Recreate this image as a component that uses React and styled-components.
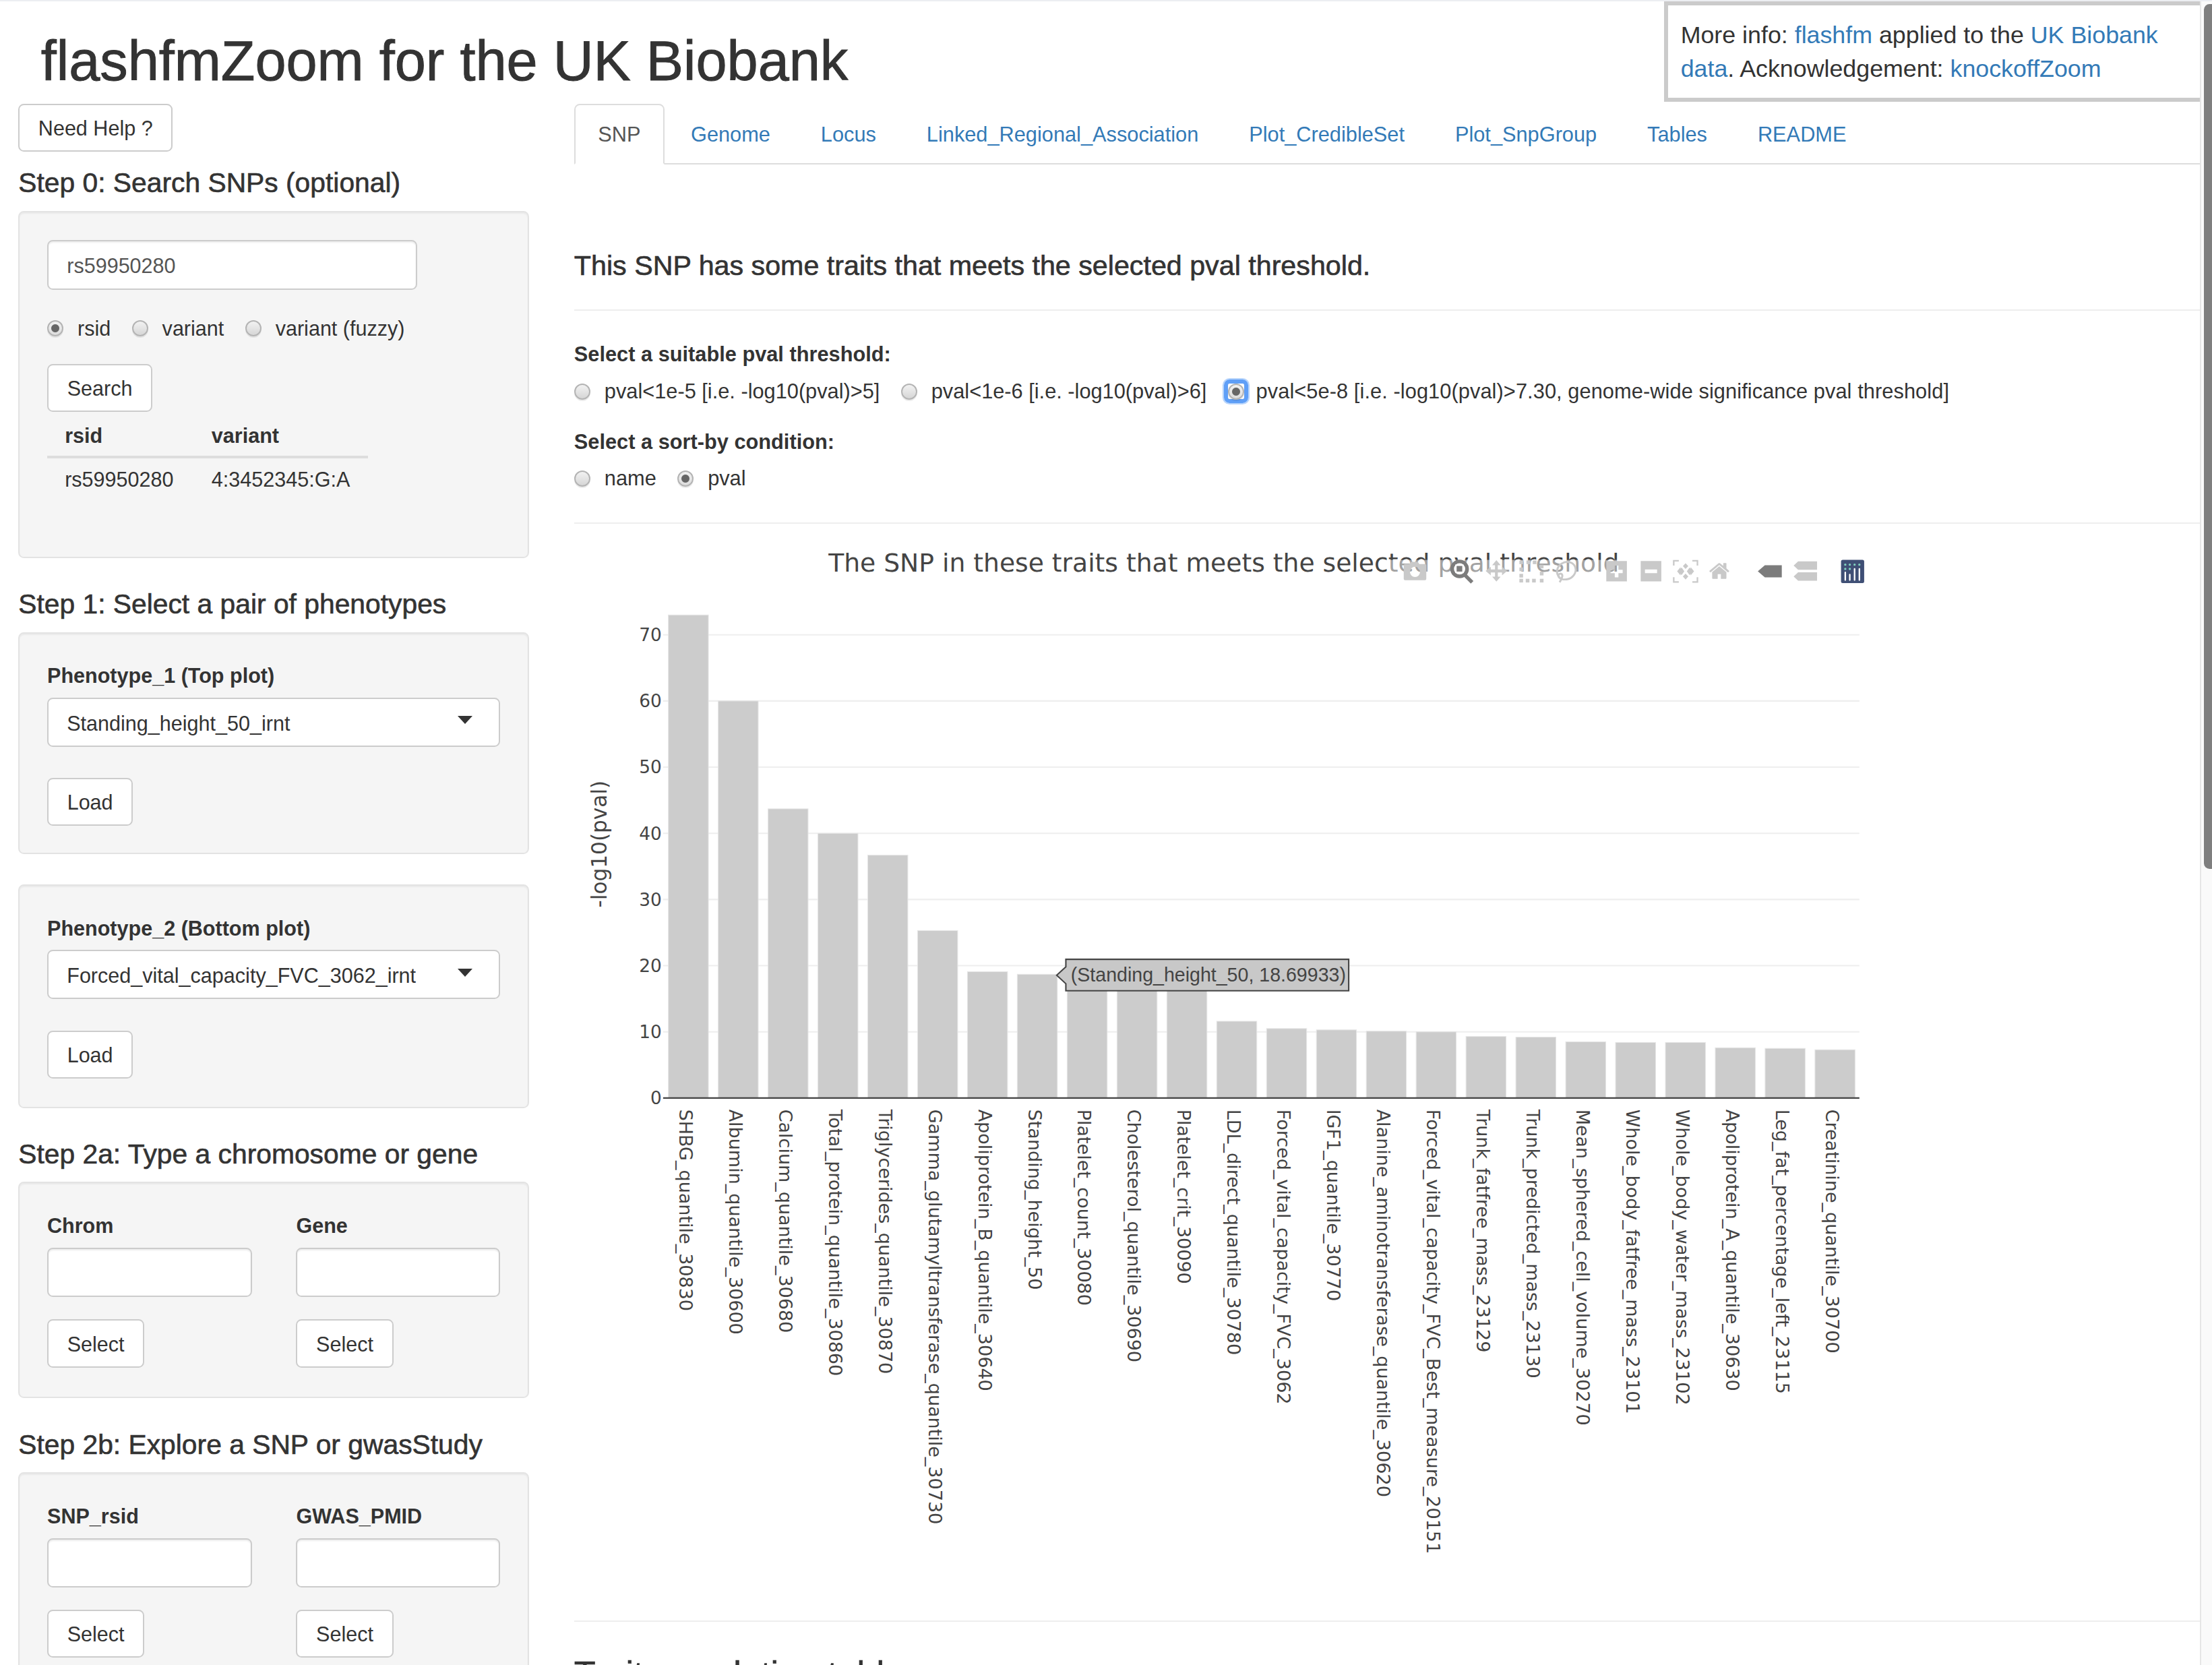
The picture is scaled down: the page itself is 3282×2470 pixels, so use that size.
import React from "react";
import styled, { createGlobalStyle } from "styled-components";

const Global = createGlobalStyle`
  html, body { margin: 0; padding: 0; height: 100%; overflow: hidden; background: #fff; }
  body { font-family: "Liberation Sans", Arial, sans-serif; color: #333; }
  #root { height: 100%; }
`;

const Shell = styled.div`
  zoom: 2.0931;
  width: 1568px;
  height: 1180px;
  overflow: hidden;
  display: flex;
  background: #fff;
  border-top: 1px solid #eceef2;
  box-sizing: border-box;
  font-size: 14.6px;
  line-height: 20px;
`;
const Content = styled.div`
  flex: 0 0 1559.5px;
  width: 1559.5px;
  min-width: 0;
`;
const ScrollTrack = styled.div`
  flex: 1;
  background: #fafafa;
  border-left: 1px solid #e6e6e6;
  padding: 2px 0 0 2px;
  box-sizing: border-box;
`;
const ScrollThumb = styled.div`
  height: 613px;
  background: #7f7f7f;
  border-radius: 4px 0 0 4px;
`;
const Header = styled.header`
  display: flex;
  justify-content: space-between;
  height: 72.5px;
`;
const Title = styled.h1`
  margin: 21.5px 0 0 29px;
  font-size: 39.6px;
  line-height: 42px;
  font-weight: 400;
  -webkit-text-stroke: 0.45px #333;
`;
const InfoBox = styled.aside`
  box-sizing: border-box;
  width: 380px;
  height: 71px;
  border: 3px solid #cbcbcb;
  border-right: 0;
  padding: 9px 9px;
  font-size: 17.1px;
  line-height: 24px;
`;
const Link = styled.a`
  color: #337ab7;
  text-decoration: none;
`;
const Columns = styled.div`
  display: flex;
`;
const Sidebar = styled.div`
  flex: 0 0 362px;
  margin: 0 32px 0 13px;
`;
const Main = styled.main`
  flex: 1;
  min-width: 0;
  font-size: 14.7px;
`;
const Button = styled.button`
  display: block;
  box-sizing: border-box;
  height: 34px;
  margin-top: ${(p) => p.$top ?? 0}px;
  padding: 1.5px 13.2px 0;
  background: #fff;
  border: 1px solid #ccc;
  border-radius: 4px;
  color: #333;
  font: inherit;
`;
const StepHeading = styled.h4`
  margin: 23px 0 9.5px;
  font-size: 19.5px;
  line-height: 20px;
  font-weight: 400;
  -webkit-text-stroke: 0.3px #333;
  ${Button} + & { margin-top: 12.5px; }
`;
const Well = styled.section`
  box-sizing: border-box;
  background: #f5f5f5;
  border: 1px solid #e3e3e3;
  border-radius: 4px;
  box-shadow: inset 0 1px 1px rgba(0, 0, 0, 0.05);
  padding: 19.5px 19.5px ${(p) => p.$bottom ?? 21}px;
  margin-bottom: ${(p) => p.$gap ?? 0}px;
  height: ${(p) => (p.$height ? `${p.$height}px` : "auto")};
`;
const TextInput = styled.input`
  display: block;
  box-sizing: border-box;
  width: ${(p) => p.$width ?? "100%"};
  height: 35.5px;
  padding: 2px 13px 0;
  border: 1px solid #ccc;
  border-radius: 4px;
  box-shadow: inset 0 1px 1px rgba(0, 0, 0, 0.075);
  background: #fff;
  color: #555;
  font: inherit;
  outline: none;
`;
const RadioRow = styled.div`
  display: flex;
  align-items: center;
  height: 20px;
  margin-top: ${(p) => p.$top ?? 6}px;
`;
const RadioLabel = styled.label`
  display: flex;
  align-items: center;
  margin-right: ${(p) => p.$gap ?? 15}px;
  color: #333;
  letter-spacing: ${(p) => p.$track ?? 0}px;
`;
const Radio = styled.input.attrs({ type: "radio", readOnly: true })`
  appearance: none;
  box-sizing: border-box;
  width: 11.5px;
  height: 11.5px;
  margin: 0 ${(p) => p.$labelGap ?? 10}px 0 0;
  flex: none;
  border-radius: 50%;
  border: 1px solid #b4b4b4;
  background: linear-gradient(#f2f2f2, #d6d6d6);
  box-shadow: 0 1px 0 rgba(0, 0, 0, 0.08);
  &:checked {
    background: radial-gradient(circle, #666 0 2.6px, transparent 3.1px), linear-gradient(#f2f2f2, #dcdcdc);
  }
`;
const FocusRing = styled.span`
  box-sizing: border-box;
  display: flex;
  align-items: center;
  justify-content: center;
  width: 17px;
  height: 17px;
  margin: 0 5.5px 0 -2.5px;
  border: 3px solid #5f9ff7;
  border-radius: 4px;
  box-shadow: 0 0 0 1px rgba(95, 159, 247, 0.45);
  ${Radio} { margin: 0; }
`;
const ResultTable = styled.table`
  border-collapse: collapse;
  width: 227.5px;
  margin-top: 7px;
  th, td { text-align: left; padding: 0 0 0 12.5px; font-size: 14.6px; color: #333; }
  th { height: 25px; padding-bottom: 4px; box-sizing: border-box; border-bottom: 2px solid #ddd; vertical-align: middle; font-weight: 700; }
  td { height: 31px; }
  th:first-child, td:first-child { width: 104px; box-sizing: border-box; }
`;
const FieldLabel = styled.label`
  display: block;
  box-sizing: border-box;
  font-weight: 700;
  height: 21px;
  padding-top: 1px;
  margin-bottom: 5px;
`;
const SelectBox = styled.div`
  box-sizing: border-box;
  height: 35px;
  padding: 2px 18.5px 0 13px;
  display: flex;
  align-items: center;
  justify-content: space-between;
  background: #fff;
  border: 1px solid #ccc;
  border-radius: 4px;
  margin-bottom: 22px;
`;
const Caret = styled.span`
  width: 0;
  height: 0;
  border-left: 5.3px solid transparent;
  border-right: 5.3px solid transparent;
  border-top: 6px solid #333;
  margin-top: -5px;
`;
const FieldGrid = styled.div`
  display: grid;
  grid-template-columns: 145px 144.5px;
  column-gap: 31.5px;
`;
const Field = styled.div`
  ${FieldLabel} { margin-bottom: 5px; }
  ${TextInput} { height: 35px; margin-bottom: 16px; }
`;
const TabBar = styled.nav`
  display: flex;
  height: 43px;
  box-sizing: border-box;
  border-bottom: 1px solid #ddd;
  gap: 1.4px;
`;
const Tab = styled.a`
  box-sizing: border-box;
  height: 43px;
  padding: 1.5px ${(p) => (p.$active ? 16 : 16.25)}px 0;
  display: flex;
  align-items: center;
  color: ${(p) => (p.$active ? "#555" : "#337ab7")};
  background: ${(p) => (p.$active ? "#fff" : "transparent")};
  border: 1px solid ${(p) => (p.$active ? "#ddd" : "transparent")};
  border-bottom-color: ${(p) => (p.$active ? "#fff" : "transparent")};
  border-radius: 4px 4px 0 0;
  white-space: nowrap;
`;
const SectionHeading = styled.h4`
  margin: 62px 0 0;
  font-size: 19.7px;
  line-height: 20px;
  font-weight: 400;
  -webkit-text-stroke: 0.3px #333;
`;
const Rule = styled.hr`
  border: 0;
  border-top: 1px solid #eee;
  margin: ${(p) => p.$top ?? 21}px 0 ${(p) => p.$bottom ?? 21}px;
`;
const ControlLabel = styled.div`
  font-weight: 700;
  margin-top: ${(p) => p.$top ?? 0}px;
`;
const PlotSvg = styled.svg`
  display: block;
  width: 1152px;
  height: 777px;
`;
const TableHeading = styled.h3`
  margin: 0;
  font-size: 25px;
  line-height: 26px;
  font-weight: 400;
  -webkit-text-stroke: 0.3px #333;
`;

const bars = [
  ["SHBG_quantile_30830", 73],
  ["Albumin_quantile_30600", 60],
  ["Calcium_quantile_30680", 43.7],
  ["Total_protein_quantile_30860", 40],
  ["Triglycerides_quantile_30870", 36.7],
  ["Gamma_glutamyltransferase_quantile_30730", 25.3],
  ["Apoliprotein_B_quantile_30640", 19.1],
  ["Standing_height_50", 18.7],
  ["Platelet_count_30080", 17],
  ["Cholesterol_quantile_30690", 16.5],
  ["Platelet_crit_30090", 16.5],
  ["LDL_direct_quantile_30780", 11.6],
  ["Forced_vital_capacity_FVC_3062", 10.5],
  ["IGF1_quantile_30770", 10.3],
  ["Alanine_aminotransferase_quantile_30620", 10.1],
  ["Forced_vital_capacity_FVC_Best_measure_20151", 10],
  ["Trunk_fatfree_mass_23129", 9.3],
  ["Trunk_predicted_mass_23130", 9.2],
  ["Mean_sphered_cell_volume_30270", 8.5],
  ["Whole_body_fatfree_mass_23101", 8.4],
  ["Whole_body_water_mass_23102", 8.4],
  ["Apoliprotein_A_quantile_30630", 7.6],
  ["Leg_fat_percentage_left_23115", 7.5],
  ["Creatinine_quantile_30700", 7.3],
];
const Y0 = 778;
const UNIT = 4.69;
const X0 = 473.7;
const PITCH = 35.34;
const BAR = 28.4;
const PLOT_FONT = "'DejaVu Sans', Verdana, sans-serif";
const OFF = "#c9c9c9";
const ON = "#7c7c7c";

function Modebar() {
  return (
    <g>
      <rect x="985" y="396.6" width="338" height="17" fill="#fff" opacity="0.5" />
      {/* camera */}
      <path fill={OFF} fillRule="evenodd" d="M996 399.5h3l1-1.5h5l1 1.5h4a1 1 0 0 1 1 1v9.5a1 1 0 0 1-1 1h-14a1 1 0 0 1-1-1v-9.5a1 1 0 0 1 1-1zM1003 401.5a3.6 3.6 0 1 0 0 7.2a3.6 3.6 0 1 0 0-7.2z" />
      {/* zoom */}
      <circle cx="1034.6" cy="403" r="5.3" fill="#fff" stroke={ON} strokeWidth="2.6" />
      <rect x="1032" y="400.4" width="5" height="5" fill={ON} stroke="#fff" strokeWidth="1" />
      <path d="M1038.5 407.5l5 5" stroke={ON} strokeWidth="2.6" />
      {/* pan */}
      <path fill={OFF} d="M1060.7 396.8l3 3.6h-2v3h3v-2l3.6 3.1-3.6 3v-2h-3v3h2l-3 3.5-3-3.5h2v-3h-3v2l-3.6-3 3.6-3.1v2h3v-3h-2z" />
      {/* box select */}
      <g fill={OFF}>
        <rect x="1077" y="397" width="2.6" height="2.6" />
        <rect x="1077" y="402" width="2.6" height="2.6" />
        <rect x="1077" y="406.5" width="2.6" height="2.6" />
        <rect x="1077" y="410" width="2.6" height="2.6" />
        <rect x="1081.5" y="410" width="2.6" height="2.6" />
        <rect x="1086" y="410" width="2.6" height="2.6" />
        <rect x="1091.5" y="410" width="2.6" height="2.6" />
        <rect x="1091.5" y="405" width="2.6" height="2.6" />
        <rect x="1091.5" y="400" width="2.6" height="2.6" />
        <rect x="1082" y="397" width="2.6" height="2.6" />
        <rect x="1086.5" y="397" width="2.6" height="2.6" />
      </g>
      {/* lasso */}
      <path fill="none" stroke={OFF} strokeWidth="1.4" d="M1105.5 409a6.8 6 -30 1 1 5 1.4c-2.5 .3-4.6-.7-5.4-1.4c-1-1-.2-3 1.4-2.6c1.3.4 1.5 2-1 6" />
      {/* zoom in */}
      <path fill={OFF} d="M1138.6 397.4h14.6v14.4h-14.6zM1144.6 400.6v3h-3v2.4h3v3h2.6v-3h3v-2.4h-3v-3z" fillRule="evenodd" />
      {/* zoom out */}
      <path fill={OFF} d="M1163 397.4h14.6v14.4h-14.6zM1166 403.4v2.6h8.6v-2.6z" fillRule="evenodd" />
      {/* autoscale */}
      <path fill="none" stroke={OFF} strokeWidth="1.1" d="M1190 397.2h-3.6v3.4M1199.6 397.2h3.6v3.4M1190 412.3h-3.6v-3.4M1199.6 412.3h3.6v-3.4" />
      <path fill={OFF} d="M1188.8 404.7l2.4-3v1.2l3.6-4 3.6 4v-1.2l2.4 3-2.4 3v-1.2l-3.6 4-3.6-4v1.2z" />
      <path fill="#fff" d="M1192.5 400.6l2.3 2.4 2.3-2.4.9.9-2.3 3.2 2.3 3.2-.9.9-2.3-2.4-2.3 2.4-.9-.9 2.3-3.2-2.3-3.2z" />
      {/* home */}
      <g transform="translate(1211.4 396.6) scale(0.0157 0.0157)">
        <path fill={OFF} transform="translate(0,850) scale(1,-1)" d="m786 296v-267q0-15-11-26t-25-10h-214v214h-143v-214h-214q-15 0-25 10t-11 26v267q0 1 0 2t0 2l321 264 321-264q1-1 1-4z m124 39l-34-41q-5-5-12-6h-2q-7 0-12 3l-386 322-386-322q-7-4-13-4-7 2-12 7l-35 41q-4 5-3 13t6 12l401 334q18 15 42 15t43-15l136-114v109q0 8 5 13t13 5h107q8 0 13-5t5-13v-227l122-102q5-5 6-12t-4-13z" />
      </g>
      {/* closest */}
      <path fill={ON} d="M1251 400.4h12v8.6h-12l-5-4.3z" />
      {/* compare */}
      <path fill={OFF} d="M1274.6 397.6h13.4v6h-13.4l-3.2-3zM1274.6 405.4h13.4v6h-13.4l-3.2-3z" />
      {/* plotly logo */}
      <rect x="1305" y="396.6" width="16.4" height="16.4" rx="1.2" fill="#3f4f75" />
      <g fill="#80cfbe">
        <circle cx="1308" cy="400" r=".8" /><circle cx="1311.2" cy="400" r=".8" /><circle cx="1314.6" cy="400" r=".8" /><circle cx="1318" cy="400" r=".8" />
        <circle cx="1308" cy="403" r=".8" /><circle cx="1311.2" cy="403" r=".8" />
      </g>
      <g stroke="#fff" strokeWidth="1.1" strokeLinecap="round">
        <path d="M1308 405.5v5.4M1311.2 407v3.9M1314.6 403v7.9M1318 403v7.9" />
      </g>
    </g>
  );
}

function Plot() {
  return (
    <PlotSvg viewBox="407 371 1152 777" role="img">
      <g stroke="#eee" strokeWidth="1">
        {[10, 20, 30, 40, 50, 60, 70].map((v) => (
          <line key={v} x1="470" x2="1318" y1={Y0 - v * UNIT} y2={Y0 - v * UNIT} />
        ))}
      </g>
      {bars.map(([name, v], i) => (
        <rect
          key={name}
          x={X0 + i * PITCH}
          y={Y0 - v * UNIT}
          width={BAR}
          height={v * UNIT}
          fill="#ccc"
          stroke="#e6e6e6"
          strokeWidth="0.5"
        />
      ))}
      <line x1="470" x2="1318" y1={Y0} y2={Y0} stroke="#444" strokeWidth="1" />
      <g fontFamily={PLOT_FONT} fontSize="12.6" fill="#444">
        {[0, 10, 20, 30, 40, 50, 60, 70].map((v) => (
          <text key={v} x="469" y={Y0 - v * UNIT + 4.5} textAnchor="end">{v}</text>
        ))}
      </g>
      <g fontFamily={PLOT_FONT} fontSize="12.9" fill="#444">
        {bars.map(([name], i) => (
          <text
            key={name}
            transform={`translate(${X0 + BAR / 2 + i * PITCH - 6.5} 786) rotate(90)`}
          >
            {name}
          </text>
        ))}
      </g>
      <text
        transform="translate(430 598) rotate(-90)"
        textAnchor="middle"
        fontFamily={PLOT_FONT}
        fontSize="14.9"
        fill="#444"
      >
        -log10(pval)
      </text>
      <text x="867.5" y="405" textAnchor="middle" fontFamily={PLOT_FONT} fontSize="18" fill="#444">
        The SNP in these traits that meets the selected pval threshold
      </text>
      <Modebar />
      <path d="M749 691L755.5 685V679.7H956V702H755.5V697Z" fill="#c8c8c8" stroke="#444" strokeWidth="1" />
      <text x="759" y="695.5" fontFamily="'Liberation Sans', Arial, sans-serif" fontSize="13.65" fill="#444">
        (Standing_height_50, 18.69933)
      </text>
    </PlotSvg>
  );
}

function SelectField({ label, value }) {
  return (
    <>
      <FieldLabel>{label}</FieldLabel>
      <SelectBox>
        {value}
        <Caret />
      </SelectBox>
      <Button>Load</Button>
    </>
  );
}

function PickPair({ left, right }) {
  return (
    <FieldGrid>
      {[left, right].map((l) => (
        <Field key={l}>
          <FieldLabel>{l}</FieldLabel>
          <TextInput />
          <Button>Select</Button>
        </Field>
      ))}
    </FieldGrid>
  );
}

export default function App() {
  return (
    <>
      <Global />
      <Shell>
        <Content>
          <Header>
            <Title>flashfmZoom for the UK Biobank</Title>
            <InfoBox>
              More info: <Link>flashfm</Link> applied to the <Link>UK Biobank</Link> <Link>data</Link>. Acknowledgement:{" "}
              <Link>knockoffZoom</Link>
            </InfoBox>
          </Header>
          <Columns>
            <Sidebar>
              <Button>Need Help ?</Button>
              <StepHeading>Step 0: Search SNPs (optional)</StepHeading>
              <Well $height={246}>
                <TextInput $width="262.5px" defaultValue="rs59950280" />
                <RadioRow $top={17.5}>
                  <RadioLabel><Radio defaultChecked name="s" />rsid</RadioLabel>
                  <RadioLabel><Radio name="s" />variant</RadioLabel>
                  <RadioLabel><Radio name="s" />variant (fuzzy)</RadioLabel>
                </RadioRow>
                <Button $top={15}>Search</Button>
                <ResultTable>
                  <thead><tr><th>rsid</th><th>variant</th></tr></thead>
                  <tbody><tr><td>rs59950280</td><td>4:3452345:G:A</td></tr></tbody>
                </ResultTable>
              </Well>
              <StepHeading>Step 1: Select a pair of phenotypes</StepHeading>
              <Well $gap={21.5} $bottom={19}>
                <SelectField label="Phenotype_1 (Top plot)" value="Standing_height_50_irnt" />
              </Well>
              <Well $bottom={20}>
                <SelectField label="Phenotype_2 (Bottom plot)" value="Forced_vital_capacity_FVC_3062_irnt" />
              </Well>
              <StepHeading>Step 2a: Type a chromosome or gene</StepHeading>
              <Well>
                <PickPair left="Chrom" right="Gene" />
              </Well>
              <StepHeading>Step 2b: Explore a SNP or gwasStudy</StepHeading>
              <Well>
                <PickPair left="SNP_rsid" right="GWAS_PMID" />
              </Well>
            </Sidebar>
            <Main>
              <TabBar>
                {["SNP", "Genome", "Locus", "Linked_Regional_Association", "Plot_CredibleSet", "Plot_SnpGroup", "Tables", "README"].map((t, i) => (
                  <Tab key={t} $active={i === 0}>{t}</Tab>
                ))}
              </TabBar>
              <SectionHeading>This SNP has some traits that meets the selected pval threshold.</SectionHeading>
              <Rule />
              <ControlLabel>Select a suitable pval threshold:</ControlLabel>
              <RadioRow>
                <RadioLabel><Radio name="p" />pval&lt;1e-5 [i.e. -log10(pval)&gt;5]</RadioLabel>
                <RadioLabel><Radio name="p" />pval&lt;1e-6 [i.e. -log10(pval)&gt;6]</RadioLabel>
                <RadioLabel $track={0.04}><FocusRing><Radio name="p" defaultChecked /></FocusRing>pval&lt;5e-8 [i.e. -log10(pval)&gt;7.30, genome-wide significance pval threshold]</RadioLabel>
              </RadioRow>
              <ControlLabel $top={16}>Select a sort-by condition:</ControlLabel>
              <RadioRow>
                <RadioLabel><Radio name="o" />name</RadioLabel>
                <RadioLabel><Radio name="o" defaultChecked />pval</RadioLabel>
              </RadioRow>
              <Rule $bottom={0} />
              <Plot />
              <Rule $top={0} $bottom={24} />
              <TableHeading>Trait correlation table</TableHeading>
            </Main>
          </Columns>
        </Content>
        <ScrollTrack><ScrollThumb /></ScrollTrack>
      </Shell>
    </>
  );
}
